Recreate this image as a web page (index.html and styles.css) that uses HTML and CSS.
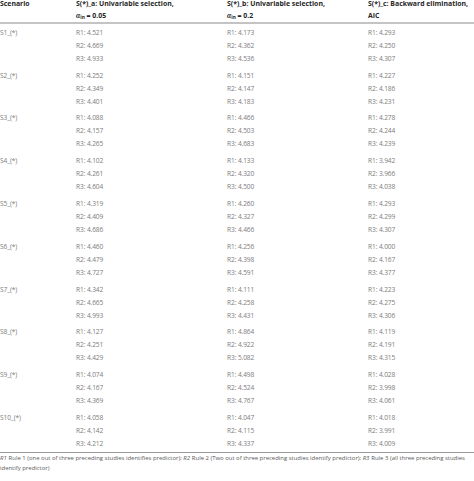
FILE: index.html
```html
<!DOCTYPE html>
<html>
<head>
<meta charset="utf-8">
<link rel="stylesheet" href="styles.css">
</head>
<body>
<table class="results">
  <colgroup>
    <col class="c-scen">
    <col class="c-a">
    <col class="c-b">
    <col class="c-c">
  </colgroup>
  <thead>
    <tr>
      <th>Scenario<br>&nbsp;</th>
      <th>S(*)_a: Univariable selection,<br><span class="alpha"><i>α</i><sub>in</sub> = 0.05</span></th>
      <th>S(*)_b: Univariable selection,<br><span class="alpha"><i>α</i><sub>in</sub> = 0.2</span></th>
      <th>S(*)_c: Backward elimination,<br>AIC</th>
    </tr>
  </thead>
  <tbody>
    <tr><td>S1_(*)</td><td>R1: 4.521<br>R2: 4.669<br>R3: 4.933</td><td>R1: 4.173<br>R2: 4.362<br>R3: 4.536</td><td>R1: 4.293<br>R2: 4.250<br>R3: 4.307</td></tr>
    <tr><td>S2_(*)</td><td>R1: 4.252<br>R2: 4.349<br>R3: 4.401</td><td>R1: 4.151<br>R2: 4.147<br>R3: 4.183</td><td>R1: 4.227<br>R2: 4.186<br>R3: 4.231</td></tr>
    <tr><td>S3_(*)</td><td>R1: 4.088<br>R2: 4.157<br>R3: 4.265</td><td>R1: 4.466<br>R2: 4.503<br>R3: 4.683</td><td>R1: 4.278<br>R2: 4.244<br>R3: 4.239</td></tr>
    <tr><td>S4_(*)</td><td>R1: 4.102<br>R2: 4.261<br>R3: 4.604</td><td>R1: 4.133<br>R2: 4.320<br>R3: 4.500</td><td>R1: 3.942<br>R2: 3.966<br>R3: 4.038</td></tr>
    <tr><td>S5_(*)</td><td>R1: 4.319<br>R2: 4.409<br>R3: 4.686</td><td>R1: 4.260<br>R2: 4.327<br>R3: 4.466</td><td>R1: 4.293<br>R2: 4.299<br>R3: 4.307</td></tr>
    <tr><td>S6_(*)</td><td>R1: 4.460<br>R2: 4.479<br>R3: 4.727</td><td>R1: 4.256<br>R2: 4.398<br>R3: 4.591</td><td>R1: 4.000<br>R2: 4.167<br>R3: 4.377</td></tr>
    <tr><td>S7_(*)</td><td>R1: 4.342<br>R2: 4.665<br>R3: 4.993</td><td>R1: 4.111<br>R2: 4.258<br>R3: 4.431</td><td>R1: 4.223<br>R2: 4.275<br>R3: 4.306</td></tr>
    <tr><td>S8_(*)</td><td>R1: 4.127<br>R2: 4.251<br>R3: 4.429</td><td>R1: 4.864<br>R2: 4.922<br>R3: 5.082</td><td>R1: 4.119<br>R2: 4.191<br>R3: 4.315</td></tr>
    <tr><td>S9_(*)</td><td>R1: 4.074<br>R2: 4.167<br>R3: 4.369</td><td>R1: 4.498<br>R2: 4.524<br>R3: 4.767</td><td>R1: 4.028<br>R2: 3.998<br>R3: 4.061</td></tr>
    <tr><td>S10_(*)</td><td>R1: 4.058<br>R2: 4.142<br>R3: 4.212</td><td>R1: 4.047<br>R2: 4.115<br>R3: 4.337</td><td>R1: 4.018<br>R2: 3.991<br>R3: 4.009</td></tr>
  </tbody>
</table>
<p class="note"><i>R1</i> Rule 1 (one out of three preceding studies identifies predictor); <i>R2</i> Rule 2 (Two out of three preceding studies identify predictor); <i>R3</i> Rule 3 (all three preceding studies <span class="tail">identify predictor)</span></p>
</body>
</html>
```

FILE: styles.css
```css
html, body {
  margin: 0;
  padding: 0;
  background: #ffffff;
}

body {
  width: 474px;
  font-family: "Open Sans", "Noto Sans", "DejaVu Sans", sans-serif;
}

.results {
  width: 474px;
  border-collapse: collapse;
  table-layout: fixed;
  margin-top: -2px;
}

.c-scen { width: 76px; }
.c-a { width: 151px; }
.c-b { width: 141px; }
.c-c { width: 106px; }

.results th {
  text-align: left;
  vertical-align: top;
  font-weight: 700;
  font-size: 6.9px;
  line-height: 12px;
  color: #262626;
  padding: 0;
  white-space: nowrap;
  border-bottom: 2px solid #c4c4c4;
}

.alpha i {
  font-family: "Liberation Serif", serif;
  font-size: 7.6px;
}

.alpha sub {
  font-size: 4.8px;
  vertical-align: -1px;
  line-height: 0;
}

.results td {
  text-align: left;
  vertical-align: top;
  font-size: 6.6px;
  line-height: 13px;
  color: #7c7c7c;
  padding: 1.9px 0;
  white-space: nowrap;
  letter-spacing: -0.1px;
}

.note {
  margin: 0;
  border-top: 1px solid #9a9a9a;
  padding-top: 1.5px;
  font-size: 5.95px;
  line-height: 9.5px;
  color: #5a5a5a;
}

.note i {
  margin-right: 0.4px;
}

.tail {
  white-space: nowrap;
}
```
